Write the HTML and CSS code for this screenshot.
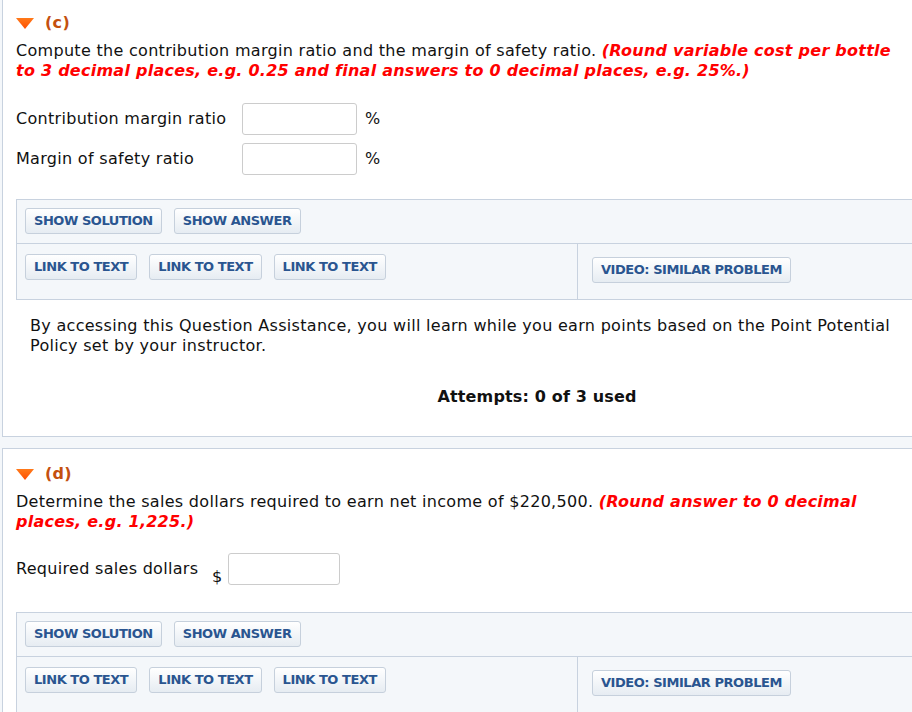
FILE: index.html
```html
<!DOCTYPE html>
<html>
<head>
<meta charset="utf-8">
<link rel="stylesheet" href="styles.css">
</head>
<body>
<div class="page">
  <section class="part">
    <div class="part-head">
      <svg class="caret" width="18" height="11" viewBox="0 0 18 11"><defs><linearGradient id="cg" x1="0" y1="0" x2="0" y2="1"><stop offset="0" stop-color="#ff7a1a"/><stop offset="1" stop-color="#ff4d00"/></linearGradient></defs><polygon points="0,0 18,0 9,11" fill="url(#cg)"/></svg>
      <span class="part-label">(c)</span>
    </div>
    <p class="question">Compute the contribution margin ratio and the margin of safety ratio. <em class="hint">(Round variable cost per bottle to 3 decimal places, e.g. 0.25 and final answers to 0 decimal places, e.g. 25%.)</em></p>
    <div class="answers">
      <div class="field">
        <span class="field-label">Contribution margin ratio</span>
        <input class="field-input" type="text">
        <span class="unit">%</span>
      </div>
      <div class="field">
        <span class="field-label">Margin of safety ratio</span>
        <input class="field-input" type="text">
        <span class="unit">%</span>
      </div>
    </div>
    <div class="assist">
      <div class="assist-row">
        <button class="btn">SHOW SOLUTION</button>
        <button class="btn">SHOW ANSWER</button>
      </div>
      <div class="assist-row assist-split">
        <div class="cell-links">
          <button class="btn">LINK TO TEXT</button>
          <button class="btn">LINK TO TEXT</button>
          <button class="btn">LINK TO TEXT</button>
        </div>
        <div class="cell-video">
          <button class="btn">VIDEO: SIMILAR PROBLEM</button>
        </div>
      </div>
    </div>
    <p class="notice">By accessing this Question Assistance, you will learn while you earn points based on the Point Potential Policy set by your instructor.</p>
    <p class="attempts">Attempts: 0 of 3 used</p>
  </section>

  <section class="part part-next">
    <div class="part-head">
      <svg class="caret" width="18" height="11" viewBox="0 0 18 11"><defs><linearGradient id="cg2" x1="0" y1="0" x2="0" y2="1"><stop offset="0" stop-color="#ff7a1a"/><stop offset="1" stop-color="#ff4d00"/></linearGradient></defs><polygon points="0,0 18,0 9,11" fill="url(#cg2)"/></svg>
      <span class="part-label">(d)</span>
    </div>
    <p class="question">Determine the sales dollars required to earn net income of $220,500. <em class="hint">(Round answer to 0 decimal places, e.g. 1,225.)</em></p>
    <div class="answers answers-money">
      <div class="field">
        <span class="field-label field-label-short">Required sales dollars</span>
        <span class="currency">$</span>
        <input class="field-input field-input-money" type="text">
      </div>
    </div>
    <div class="assist assist-lower">
      <div class="assist-row">
        <button class="btn">SHOW SOLUTION</button>
        <button class="btn">SHOW ANSWER</button>
      </div>
      <div class="assist-row assist-split">
        <div class="cell-links">
          <button class="btn">LINK TO TEXT</button>
          <button class="btn">LINK TO TEXT</button>
          <button class="btn">LINK TO TEXT</button>
        </div>
        <div class="cell-video">
          <button class="btn">VIDEO: SIMILAR PROBLEM</button>
        </div>
      </div>
    </div>
  </section>
</div>
</body>
</html>
```

FILE: styles.css
```css
html, body {
  margin: 0;
  padding: 0;
}

body {
  background: #f4f7fa;
  font-family: "DejaVu Sans", Verdana, sans-serif;
  font-size: 16px;
  line-height: 20px;
  letter-spacing: 0.3px;
  color: #111;
  overflow: hidden;
}

.page {
  width: 1072px;
  margin-top: -3px;
}

.part {
  margin-left: 2px;
  background: #fff;
  border: 1px solid #c8d2df;
  padding: 15px 13px 29px 13px;
}

.part-next {
  margin-top: 11px;
}

.part-head {
  display: flex;
  align-items: center;
  gap: 11px;
  height: 20px;
}

.caret {
  display: block;
}

.part-label {
  font-weight: bold;
  color: #c4500f;
}

.question {
  margin: 8px 0 0 0;
  max-width: 884px;
}

.hint {
  color: #ff0000;
  font-weight: bold;
  font-style: italic;
  letter-spacing: 0.25px;
}

.answers {
  margin-top: 22px;
  display: flex;
  flex-direction: column;
  gap: 8px;
}

.answers-money {
  margin-top: 21px;
}

.field {
  display: flex;
  align-items: center;
}

.field-label {
  width: 226px;
  flex: none;
}

.field-label-short {
  width: 196px;
}

.field-input {
  width: 115px;
  height: 32px;
  box-sizing: border-box;
  border: 1px solid #cccccc;
  border-radius: 3px;
  background: #fff;
  margin: 0;
  padding: 0 4px;
  font: inherit;
}

.field-input-money {
  width: 112px;
}

.unit {
  margin-left: 8px;
}

.currency {
  align-self: flex-end;
  margin-right: 6px;
  line-height: 16px;
}

.assist {
  margin-top: 24px;
  background: #f4f7fa;
  border: 1px solid #c8d2df;
  border-right: none;
}

.assist-lower {
  margin-top: 27px;
}

.assist-row {
  display: flex;
  gap: 12px;
  padding: 8px 8px 9px 8px;
}

.assist-split {
  border-top: 1px solid #c8d2df;
  padding: 0;
  gap: 0;
  min-height: 55px;
}

.cell-links {
  width: 544px;
  display: flex;
  gap: 12px;
  padding: 10px 8px 0 8px;
  align-items: flex-start;
}

.cell-video {
  flex: 1;
  border-left: 1px solid #c8d2df;
  padding: 13px 14px 0 14px;
}

.btn {
  height: 26px;
  box-sizing: border-box;
  padding: 0 8px;
  border: 1px solid #c6d0dc;
  border-radius: 3px;
  background: linear-gradient(#ffffff, #e6ecf2);
  color: #2a5590;
  font-family: "DejaVu Sans", Verdana, sans-serif;
  font-weight: bold;
  font-size: 13px;
  letter-spacing: -0.45px;
  line-height: 24px;
  margin: 0;
  white-space: nowrap;
}

.notice {
  margin: 16px 0 0 0;
  padding: 0 14px;
  max-width: 880px;
}

.attempts {
  margin: 31px 0 0 0;
  text-align: center;
  font-weight: bold;
  letter-spacing: 0.15px;
}
```
